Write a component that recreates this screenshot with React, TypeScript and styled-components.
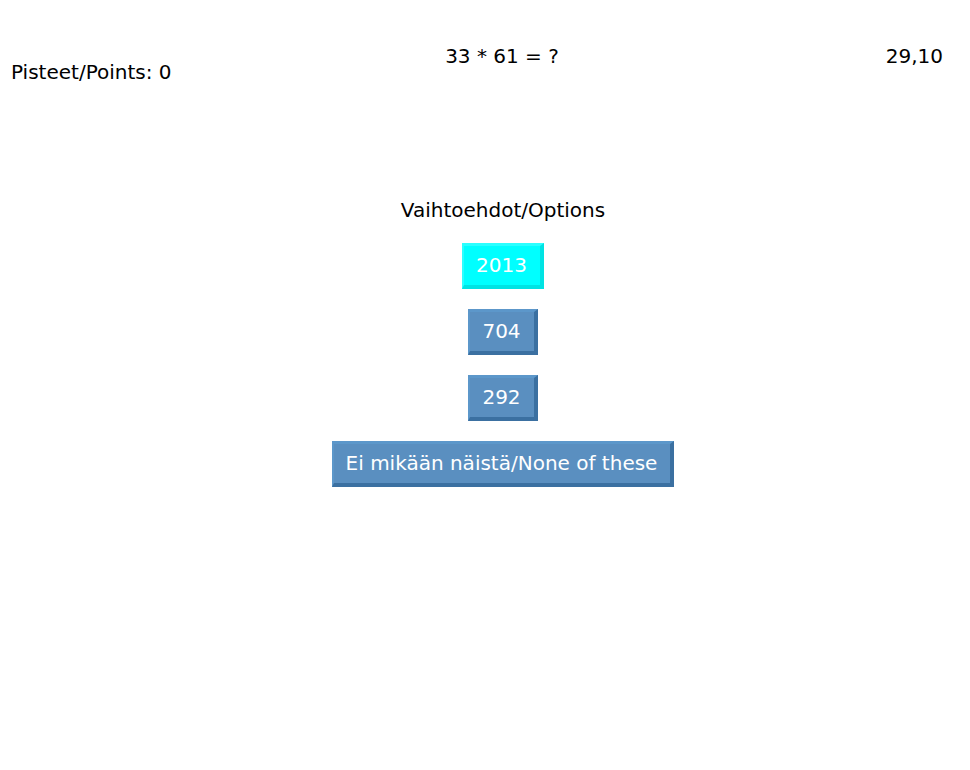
import styled, { createGlobalStyle } from "styled-components";

const GlobalStyle = createGlobalStyle`
  html, body {
    margin: 0;
    padding: 0;
    background: #ffffff;
  }
  body {
    font-family: "DejaVu Sans", "Liberation Sans", sans-serif;
    font-size: 20px;
    color: #000000;
  }
`;

const Page = styled.div`
  display: flex;
  flex-direction: column;
  min-height: 770px;
`;

const Header = styled.header`
  display: flex;
  align-items: flex-start;
  padding: 44px 27px 0 11px;
`;

const Score = styled.div`
  width: 180px;
  padding-top: 16px;
  white-space: nowrap;
`;

const Question = styled.div`
  flex: 1;
  text-align: center;
`;

const Timer = styled.div`
  width: 130px;
  text-align: right;
`;

const Options = styled.section`
  display: flex;
  flex-direction: column;
  align-items: center;
  gap: 20px;
  padding: 114px 0 0 36px;
`;

const OptionsTitle = styled.h2`
  margin: 0 0 1px;
  font-size: 20px;
  font-weight: normal;
`;

const OptionButton = styled.button<{ $selected?: boolean }>`
  font-family: "DejaVu Sans", "Liberation Sans", sans-serif;
  font-size: 20px;
  line-height: 23px;
  color: #ffffff;
  padding: 8px 13px 8px 12px;
  border-style: solid;
  border-width: 3px 4px 4px 2px;
  background: ${(p) => (p.$selected ? "#00ffff" : "#5a8fc0")};
  border-color: ${(p) =>
    p.$selected
      ? "#2bffff #00e3e3 #00e3e3 #2bffff"
      : "#5c97ca #3b70a1 #3b70a1 #5c97ca"};
  cursor: pointer;
`;

const options = ["2013", "704", "292", "Ei mikään näistä/None of these"];

function App() {
  return (
    <Page>
      <GlobalStyle />
      <Header>
        <Score>Pisteet/Points: 0</Score>
        <Question>33 * 61 = ?</Question>
        <Timer>29,10</Timer>
      </Header>
      <Options>
        <OptionsTitle>Vaihtoehdot/Options</OptionsTitle>
        {options.map((opt, i) => (
          <OptionButton key={opt} $selected={i === 0}>
            {opt}
          </OptionButton>
        ))}
      </Options>
    </Page>
  );
}

export default App;
